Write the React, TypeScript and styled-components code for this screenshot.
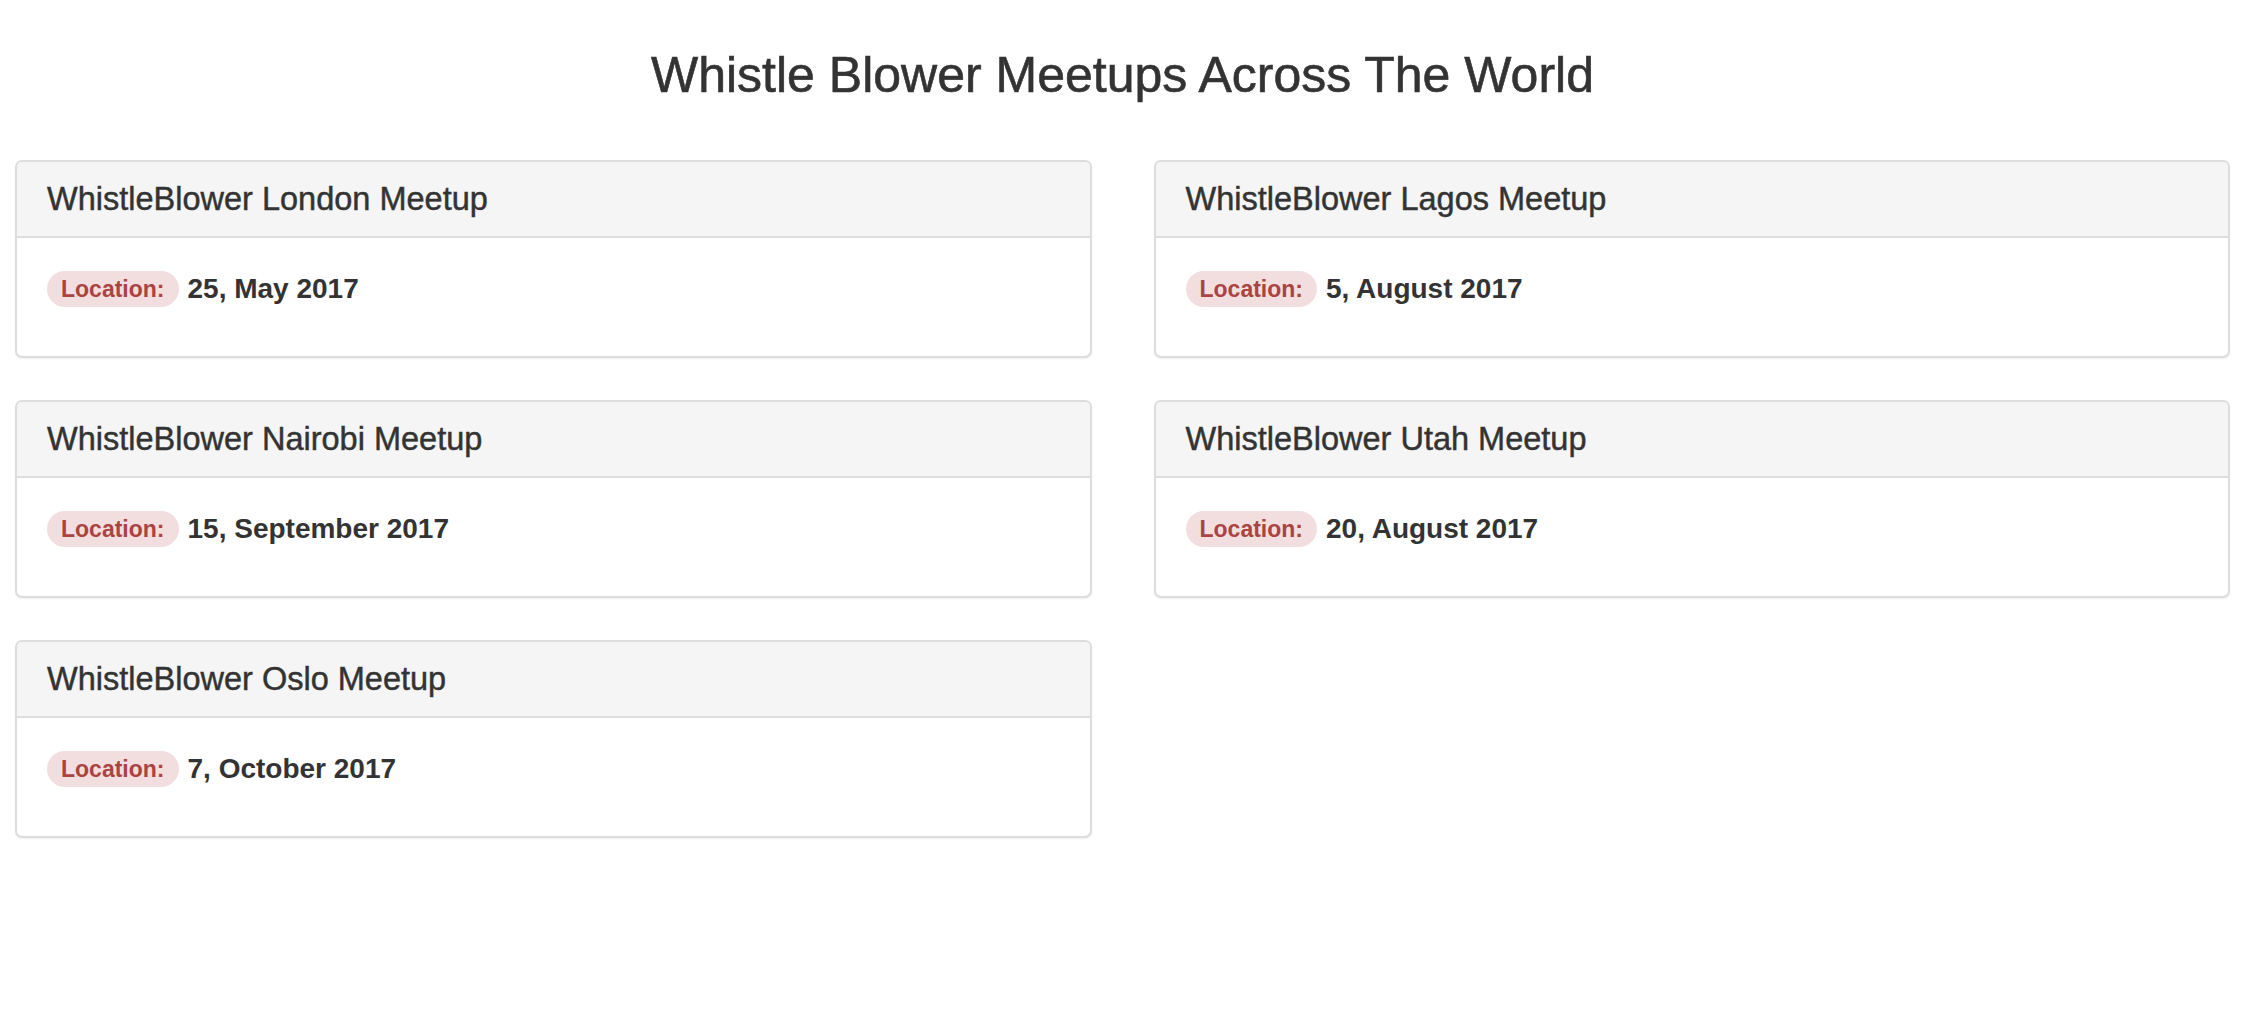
import React from "react";
import styled, { createGlobalStyle } from "styled-components";

const GlobalStyle = createGlobalStyle`
  html, body {
    margin: 0;
    padding: 0;
    background: #ffffff;
  }
  body {
    font-family: "Liberation Sans", Arial, Helvetica, sans-serif;
    color: #333333;
  }
`;

const Page = styled.div`
  padding: 0 30px 40px 15px;
`;

const Title = styled.h1`
  margin: 0;
  padding: 47px 0 57px;
  font-size: 50px;
  line-height: 56px;
  font-weight: 400;
  text-align: center;
  color: #333333;
  -webkit-text-stroke: 0.6px #333333;
`;

const Grid = styled.div`
  display: grid;
  grid-template-columns: 1fr 1fr;
  column-gap: 62px;
  row-gap: 42px;
  align-items: start;
`;

const Card = styled.section`
  border: 2px solid #dddddd;
  border-radius: 7px;
  background: #ffffff;
  box-shadow: 0 1px 2px rgba(0, 0, 0, 0.06);
  overflow: hidden;
`;

const CardHeader = styled.header`
  display: flex;
  align-items: center;
  height: 74px;
  padding: 0 30px;
  background: #f5f5f5;
  border-bottom: 2px solid #dddddd;
`;

const CardTitle = styled.h3`
  margin: 0;
  font-size: 32.5px;
  line-height: 36px;
  font-weight: 400;
  color: #333333;
  -webkit-text-stroke: 0.45px #333333;
`;

const CardBody = styled.div`
  padding: 33px 30px 49px;
`;

const InfoRow = styled.div`
  display: flex;
  align-items: center;
  gap: 9px;
  height: 36px;
`;

const Badge = styled.span`
  display: inline-flex;
  align-items: center;
  height: 36px;
  padding: 0 14px;
  border-radius: 18px;
  background: #f2dede;
  color: #a94442;
  font-size: 23px;
  font-weight: 700;
`;

const DateText = styled.strong`
  font-size: 28px;
  font-weight: 700;
  color: #333333;
  line-height: 36px;
`;

const meetups = [
  { city: "London", date: "25, May 2017" },
  { city: "Lagos", date: "5, August 2017" },
  { city: "Nairobi", date: "15, September 2017" },
  { city: "Utah", date: "20, August 2017" },
  { city: "Oslo", date: "7, October 2017" },
];

export default function App() {
  return (
    <>
      <GlobalStyle />
      <Page>
        <Title>Whistle Blower Meetups Across The World</Title>
        <Grid>
          {meetups.map((m) => (
            <Card key={m.city}>
              <CardHeader>
                <CardTitle>WhistleBlower {m.city} Meetup</CardTitle>
              </CardHeader>
              <CardBody>
                <InfoRow>
                  <Badge>Location:</Badge>
                  <DateText>{m.date}</DateText>
                </InfoRow>
              </CardBody>
            </Card>
          ))}
        </Grid>
      </Page>
    </>
  );
}
